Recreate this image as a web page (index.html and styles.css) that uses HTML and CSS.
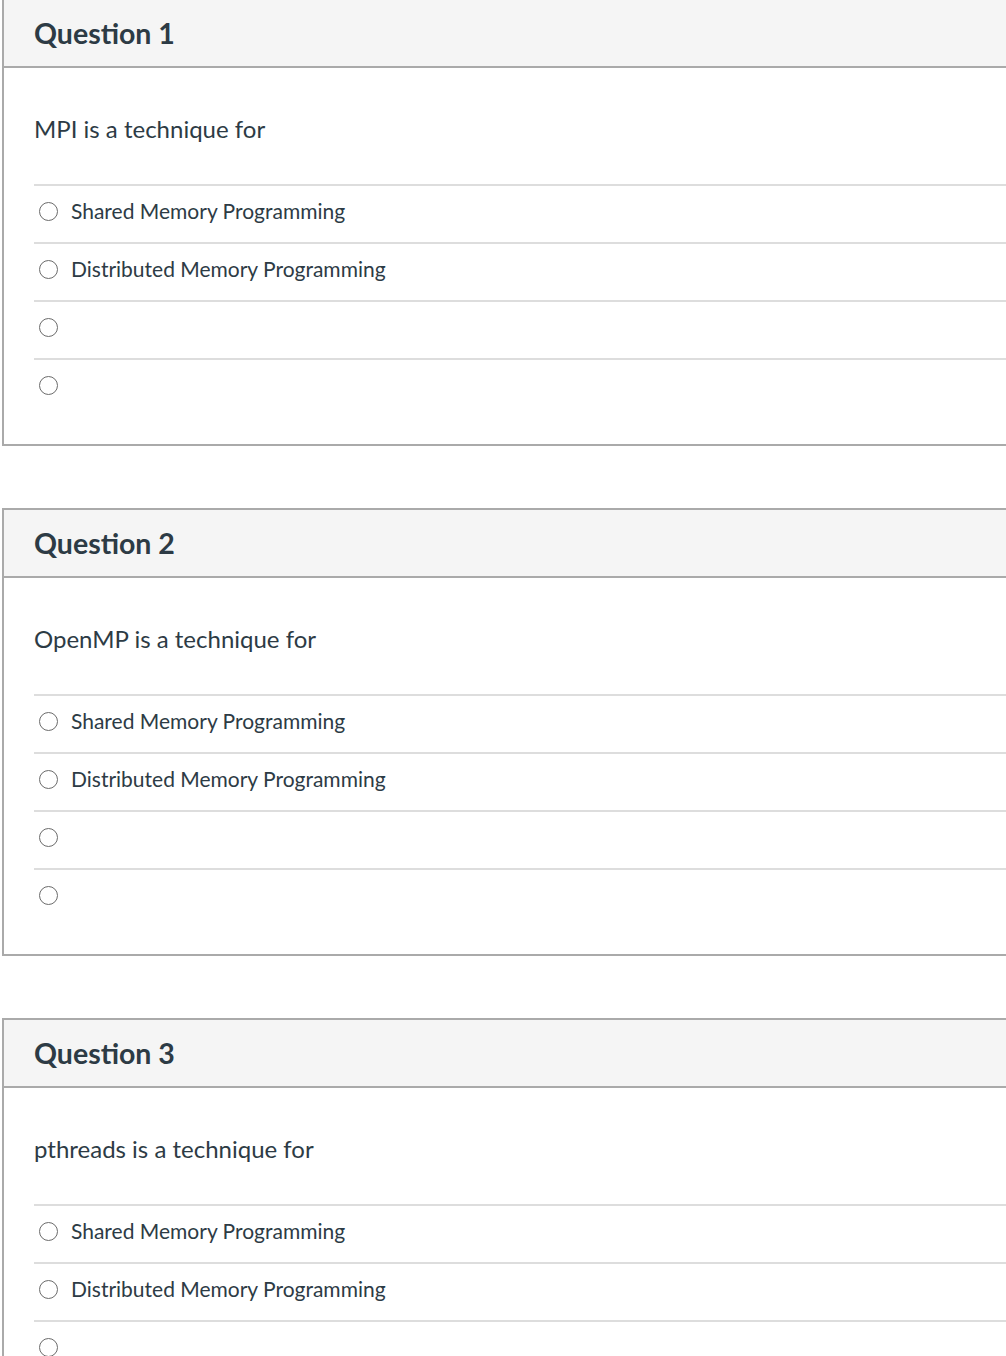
FILE: index.html
```html
<!DOCTYPE html>
<html lang="en">
<head>
<meta charset="utf-8">
<title>Quiz</title>
<link rel="stylesheet" href="styles.css">
</head>
<body>
<div class="quiz">
  <section class="question">
    <header class="q-header"><h2 class="q-title">Question 1</h2></header>
    <div class="q-body">
      <p class="q-text">MPI is a technique for</p>
      <ul class="answers">
        <li class="answer"><span class="radio"></span><span class="label">Shared Memory Programming</span></li>
        <li class="answer"><span class="radio"></span><span class="label">Distributed Memory Programming</span></li>
        <li class="answer"><span class="radio"></span><span class="label"></span></li>
        <li class="answer"><span class="radio"></span><span class="label"></span></li>
      </ul>
    </div>
  </section>
  <section class="question">
    <header class="q-header"><h2 class="q-title">Question 2</h2></header>
    <div class="q-body">
      <p class="q-text">OpenMP is a technique for</p>
      <ul class="answers">
        <li class="answer"><span class="radio"></span><span class="label">Shared Memory Programming</span></li>
        <li class="answer"><span class="radio"></span><span class="label">Distributed Memory Programming</span></li>
        <li class="answer"><span class="radio"></span><span class="label"></span></li>
        <li class="answer"><span class="radio"></span><span class="label"></span></li>
      </ul>
    </div>
  </section>
  <section class="question">
    <header class="q-header"><h2 class="q-title">Question 3</h2></header>
    <div class="q-body">
      <p class="q-text">pthreads is a technique for</p>
      <ul class="answers">
        <li class="answer"><span class="radio"></span><span class="label">Shared Memory Programming</span></li>
        <li class="answer"><span class="radio"></span><span class="label">Distributed Memory Programming</span></li>
        <li class="answer"><span class="radio"></span><span class="label"></span></li>
        <li class="answer"><span class="radio"></span><span class="label"></span></li>
      </ul>
    </div>
  </section>
</div>
</body>
</html>
```

FILE: styles.css
```css
html {
  overflow: hidden;
}
body {
  margin: 0;
  background: #ffffff;
  font-family: Lato, "Noto Sans", sans-serif;
  color: #2d3b45;
}
.quiz {
  margin-top: -2px;
  margin-left: 2px;
  display: flex;
  flex-direction: column;
  gap: 62px;
}
.question {
  border: 2px solid #aaaaaa;
  border-right: 0;
}
.q-header {
  height: 66px;
  background: #f5f5f5;
  border-bottom: 2px solid #aaaaaa;
  display: flex;
  align-items: center;
  padding-left: 30px;
}
.q-title {
  margin: 0;
  font-size: 28.5px;
  font-weight: 700;
  line-height: 34px;
}
.q-body {
  padding: 43px 0 28px 30px;
}
.q-text {
  margin: 0 0 38px 0;
  font-size: 24px;
  line-height: 35px;
}
.answers {
  list-style: none;
  margin: 0;
  padding: 0;
}
.answer {
  border-top: 2px solid #dddddd;
  padding: 10px 0 16px 0;
  height: 30px;
  display: flex;
  align-items: center;
}
.radio {
  width: 17px;
  height: 17px;
  border: 1.3px solid #6b6b6b;
  border-radius: 50%;
  margin-left: 5px;
  margin-right: 13px;
  flex: none;
}
.label {
  font-size: 21px;
  line-height: 30px;
}
```
